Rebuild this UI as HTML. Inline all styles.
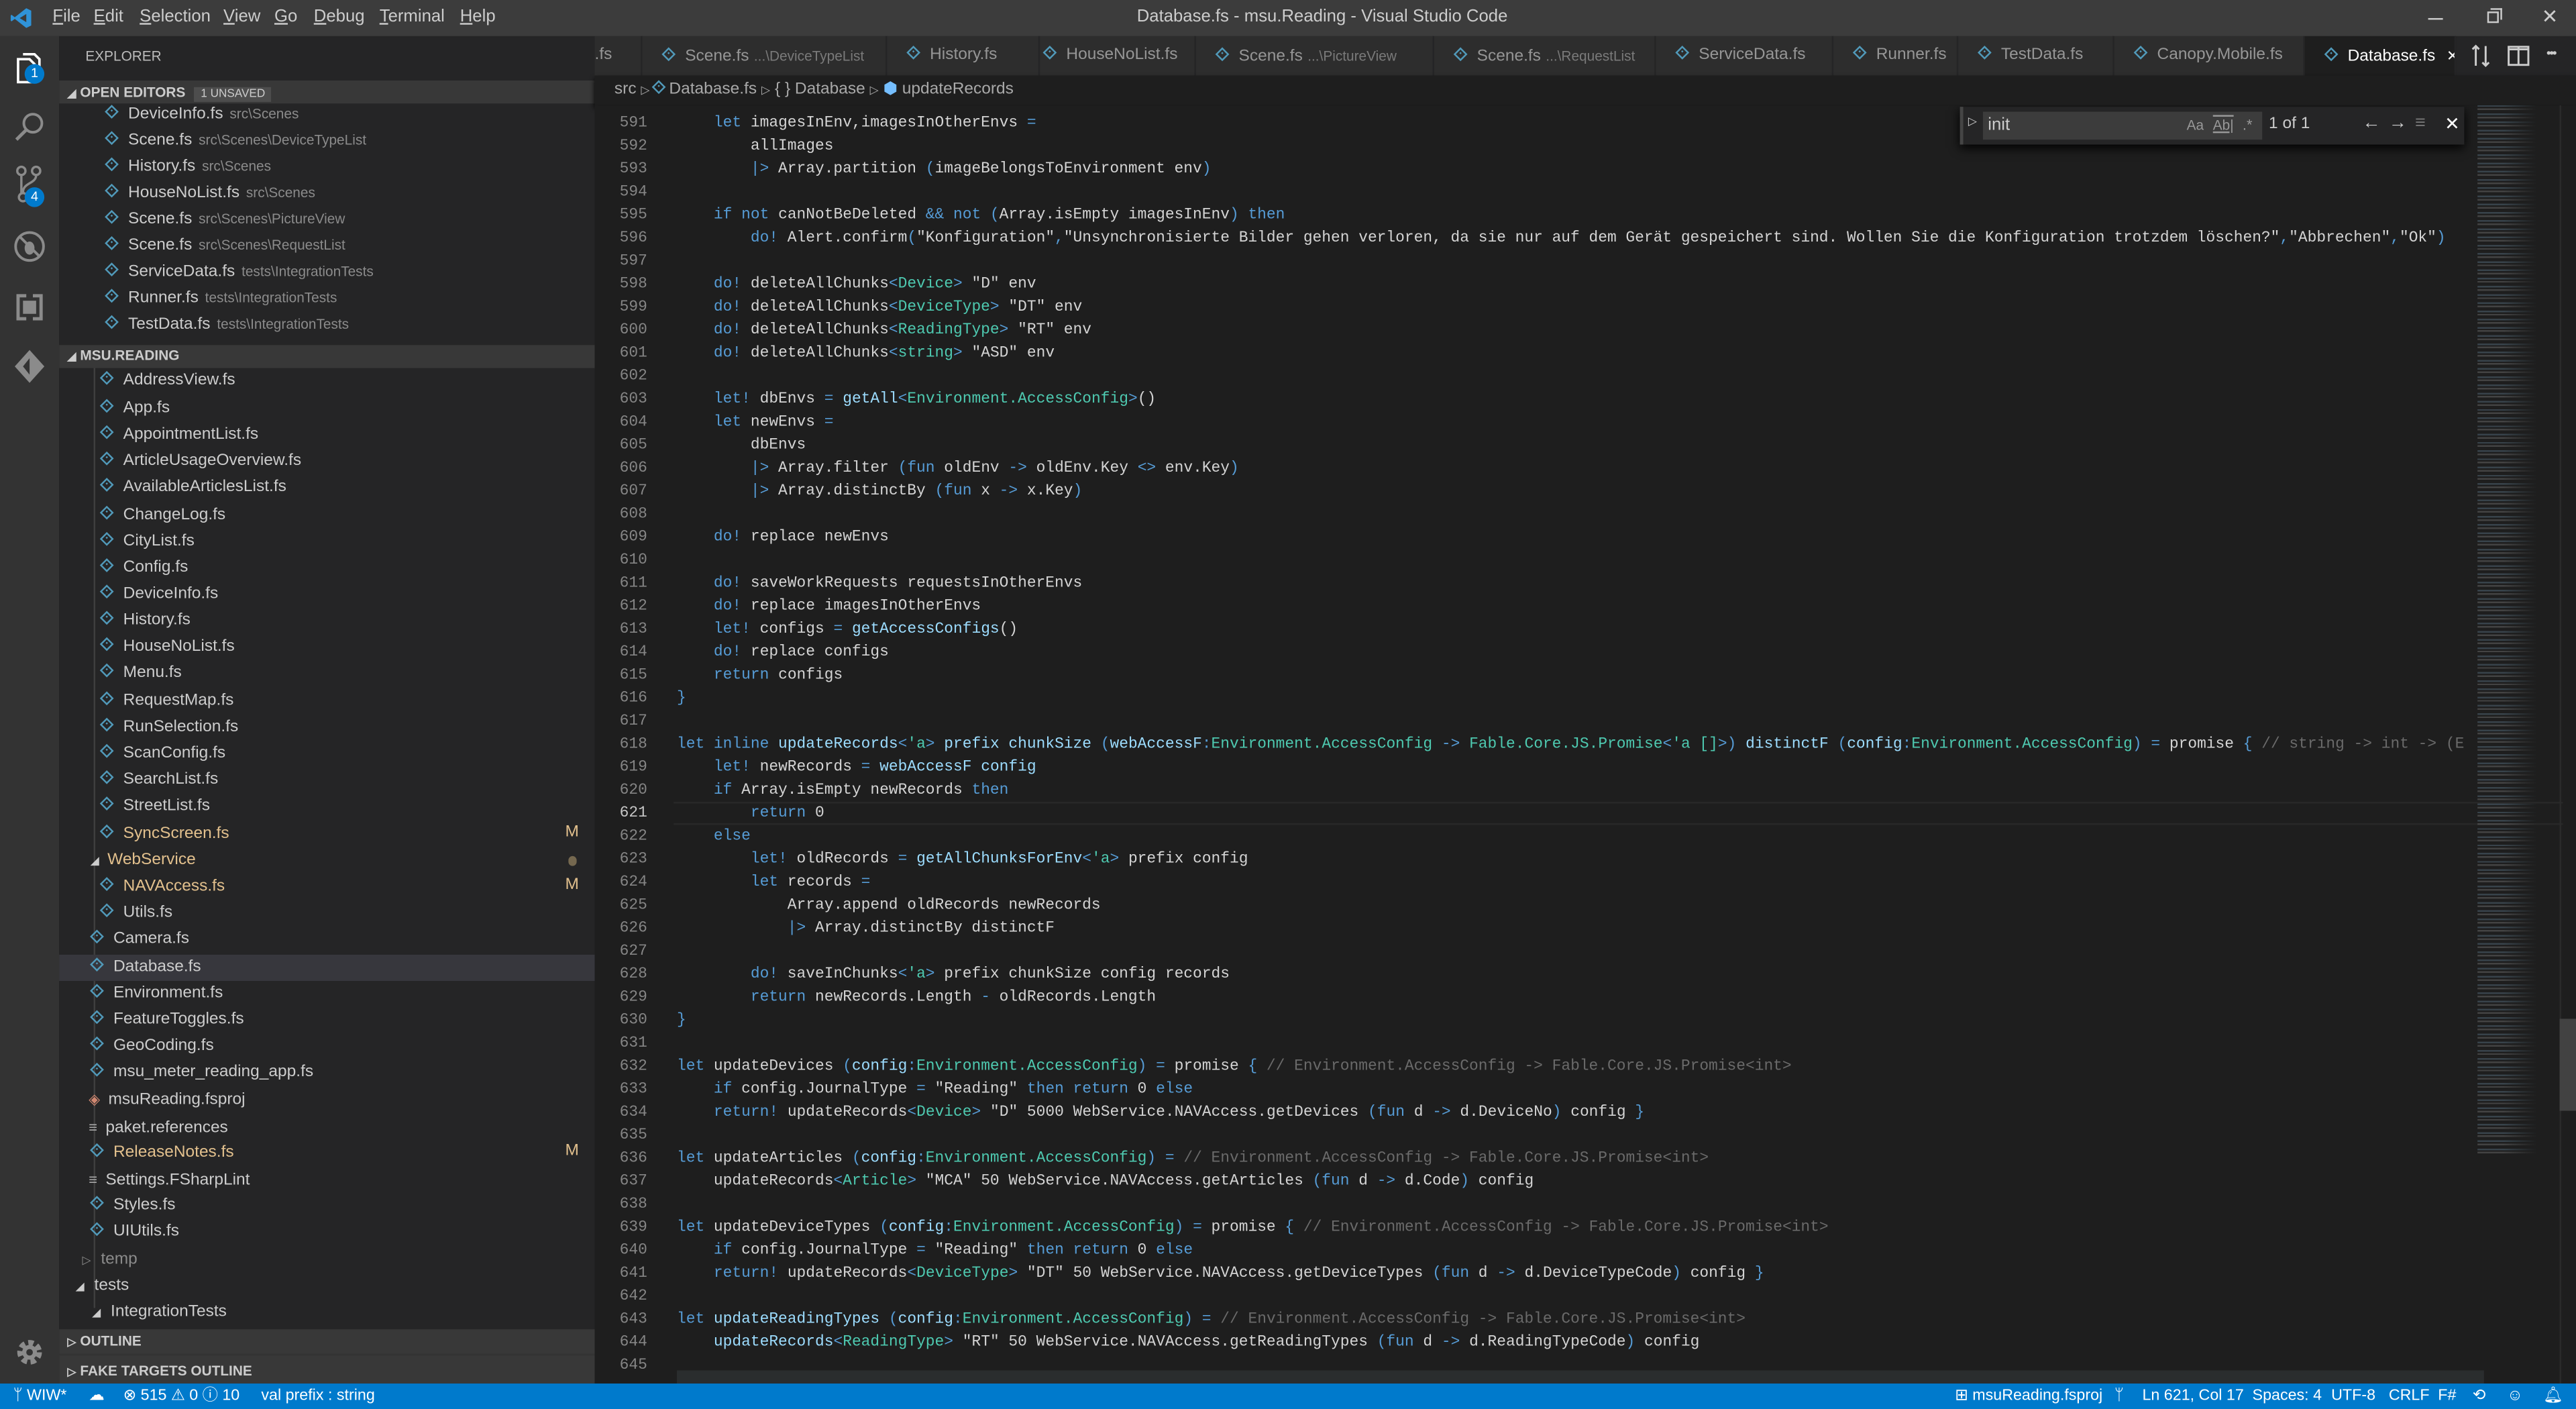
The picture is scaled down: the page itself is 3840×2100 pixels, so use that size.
<!DOCTYPE html>
<html><head><meta charset="utf-8">
<style>
*{box-sizing:border-box;margin:0;padding:0}
html,body{width:3840px;height:2100px;overflow:hidden;background:#1e1e1e}
#w{position:absolute;left:0;top:0;width:1568px;height:857.5px;transform:scale(2.44898);transform-origin:0 0;font-family:"Liberation Sans",sans-serif;font-size:11px;color:#cccccc;overflow:hidden;background:#1e1e1e}
.a{position:absolute}
#title{left:0;top:0;width:1568px;height:22px;background:#3c3c3c}
#title .m{position:absolute;top:4px;font-size:10.5px;color:#cccccc}
#title .m u{text-decoration:underline}
#act{left:0;top:22px;width:36px;height:820px;background:#333333}
#side{left:36px;top:22px;width:326px;height:820px;background:#252526}
.hdr{position:absolute;left:0;width:326px;height:14px;background:#383838;font-weight:bold;font-size:8.5px;color:#cccccc;line-height:14px}
.row{position:absolute;height:16px;line-height:16px;white-space:nowrap;font-size:10px;color:#cccccc}
.row .p{color:#8b8b8b;font-size:8.5px;margin-left:4px}
.fi{display:inline-block;width:6px;height:6px;border:1.6px solid #519aba;transform:rotate(45deg);margin-right:7px;position:relative;top:-1px}
.fi::after{content:"";position:absolute;left:0.6px;top:0.6px;width:1.2px;height:1.2px;background:#519aba}
.mod{color:#e2c08d}
.M{position:absolute;left:308px;color:#e2c08d;font-size:10px}
#tabs{left:362px;top:22px;width:1206px;height:24px;background:#252526}
.tab{position:absolute;top:0;height:24px;background:#2d2d2d;border-right:1px solid #252526;line-height:24px;font-size:10px;color:#969696;white-space:nowrap;padding-left:13px;overflow:hidden}
.tab .p{font-size:8.5px;color:#7a7a7a;margin-left:3px}
#bc{left:362px;top:46px;width:1206px;height:18px;background:#1e1e1e;font-size:10px;color:#a9a9a9;line-height:18px;padding-left:12px;box-shadow:0 2px 3px #000}
#ed{left:362px;top:64px;width:1206px;height:778px;background:#1e1e1e;overflow:hidden}
#ln{position:absolute;left:0;top:4px;width:32px;text-align:right;font-family:"Liberation Mono",monospace;font-size:9.35px;line-height:14px;color:#858585}
#code{position:absolute;left:50px;top:4px;font-family:"Liberation Mono",monospace;font-size:9.35px;line-height:14px;color:#d4d4d4}
#code div{height:14px;white-space:pre}
#ln div{height:14px}
.k{color:#569cd6}.t{color:#4ec9b0}.c{color:#6a6a6a}.f{color:#9cdcfe}
#status{left:0;top:842px;width:1568px;height:16px;background:#007acc;color:#fff;font-size:9.5px;line-height:16px}
#status span{position:absolute;top:0;white-space:nowrap}
</style></head><body><div id="w">

<div id="title" class="a">
<svg class="a" style="left:6px;top:4px" width="14" height="14" viewBox="0 0 14 14"><path d="M10 1 L13 2.5 V11.5 L10 13 L3 7.5 L1 9 L0.5 8.5 V5.5 L1 5 L3 6.5 Z M10 4.5 L6 7 L10 9.5 Z" fill="#2f93d8"/></svg>
<span class="m" style="left:32px"><u>F</u>ile</span>
<span class="m" style="left:57px"><u>E</u>dit</span>
<span class="m" style="left:85px"><u>S</u>election</span>
<span class="m" style="left:136px"><u>V</u>iew</span>
<span class="m" style="left:167px"><u>G</u>o</span>
<span class="m" style="left:191px"><u>D</u>ebug</span>
<span class="m" style="left:231px"><u>T</u>erminal</span>
<span class="m" style="left:280px"><u>H</u>elp</span>
<span class="m" style="left:692px">Database.fs - msu.Reading - Visual Studio Code</span>
<div class="a" style="left:1478px;top:11px;width:9px;height:1px;background:#ccc"></div>
<div class="a" style="left:1514px;top:7px;width:7px;height:7px;border:1px solid #ccc"></div>
<div class="a" style="left:1516px;top:5px;width:7px;height:7px;border-top:1px solid #ccc;border-right:1px solid #ccc"></div>
<span class="m" style="left:1547px;top:3px;font-size:12px">✕</span>
</div>

<div id="act" class="a">
<svg class="a" style="left:8px;top:9px" width="20" height="22" viewBox="0 0 20 22"><path d="M3 5 H10 L13 8 V19 H3 Z M6 2 H13 L16 5 V16" fill="none" stroke="#fff" stroke-width="1.5"/></svg>
<div class="a" style="left:15px;top:17px;width:12px;height:12px;border-radius:6px;background:#007acc;color:#fff;font-size:8px;text-align:center;line-height:12px">1</div>
<svg class="a" style="left:8px;top:45px" width="20" height="20" viewBox="0 0 20 20"><circle cx="12" cy="8" r="5.5" fill="none" stroke="#8b8b8b" stroke-width="1.6"/><path d="M8 12 L2 18" stroke="#8b8b8b" stroke-width="2"/></svg>
<svg class="a" style="left:9px;top:78px" width="18" height="24" viewBox="0 0 18 24"><circle cx="4" cy="4" r="2.5" fill="none" stroke="#8b8b8b" stroke-width="1.4"/><circle cx="13" cy="4" r="2.5" fill="none" stroke="#8b8b8b" stroke-width="1.4"/><circle cx="5" cy="20" r="2.5" fill="none" stroke="#8b8b8b" stroke-width="1.4"/><path d="M4 6.5 V17.5 M13 6.5 C13 12 5 11 5 17" fill="none" stroke="#8b8b8b" stroke-width="1.4"/></svg>
<div class="a" style="left:15px;top:92px;width:12px;height:12px;border-radius:6px;background:#007acc;color:#fff;font-size:8px;text-align:center;line-height:12px">4</div>
<svg class="a" style="left:8px;top:118px" width="20" height="20" viewBox="0 0 20 20"><circle cx="10" cy="10" r="8.5" fill="none" stroke="#8b8b8b" stroke-width="1.6"/><path d="M4 4 L16 16" stroke="#8b8b8b" stroke-width="1.6"/><ellipse cx="10" cy="11" rx="3" ry="4" fill="#8b8b8b"/></svg>
<svg class="a" style="left:9px;top:156px" width="18" height="18" viewBox="0 0 18 18"><path d="M1 1 H7 V3 H3 V15 H7 V17 H1 Z M11 1 H17 V17 H11 V15 H15 V3 H11 Z" fill="#8b8b8b"/><rect x="5" y="5" width="8" height="8" fill="#8b8b8b"/></svg>
<svg class="a" style="left:8px;top:190px" width="20" height="22" viewBox="0 0 20 22"><path d="M10 1 L19 11 L10 21 L1 11 Z" fill="#8b8b8b"/><path d="M10 6 L6 11 L10 16 Z" fill="#333"/></svg>
<svg class="a" style="left:9px;top:792px" width="18" height="18" viewBox="0 0 18 18"><circle cx="9" cy="9" r="5.5" fill="none" stroke="#8b8b8b" stroke-width="4" stroke-dasharray="3 2"/><circle cx="9" cy="9" r="4.5" fill="#8b8b8b"/><circle cx="9" cy="9" r="2" fill="#333"/></svg>
</div>

<div id="side" class="a">
<div class="a" style="left:16px;top:7px;font-size:8.5px;color:#bbbbbb">EXPLORER</div>
<div class="hdr" style="top:27px"><span style="margin-left:5px;font-size:7px">◢</span> <span>OPEN EDITORS</span> <span style="background:#4d4d4d;font-weight:normal;font-size:7px;padding:1px 4px;margin-left:3px">1 UNSAVED</span></div>
<div class="row" style="left:29px;top:39px"><i class="fi"></i>DeviceInfo.fs<span class="p">src\Scenes</span></div>
<div class="row" style="left:29px;top:55px"><i class="fi"></i>Scene.fs<span class="p">src\Scenes\DeviceTypeList</span></div>
<div class="row" style="left:29px;top:71px"><i class="fi"></i>History.fs<span class="p">src\Scenes</span></div>
<div class="row" style="left:29px;top:87px"><i class="fi"></i>HouseNoList.fs<span class="p">src\Scenes</span></div>
<div class="row" style="left:29px;top:103px"><i class="fi"></i>Scene.fs<span class="p">src\Scenes\PictureView</span></div>
<div class="row" style="left:29px;top:119px"><i class="fi"></i>Scene.fs<span class="p">src\Scenes\RequestList</span></div>
<div class="row" style="left:29px;top:135px"><i class="fi"></i>ServiceData.fs<span class="p">tests\IntegrationTests</span></div>
<div class="row" style="left:29px;top:151px"><i class="fi"></i>Runner.fs<span class="p">tests\IntegrationTests</span></div>
<div class="row" style="left:29px;top:167px"><i class="fi"></i>TestData.fs<span class="p">tests\IntegrationTests</span></div>
<div class="hdr" style="top:188px;height:13.5px;line-height:13.5px"><span style="margin-left:5px;font-size:7px">◢</span> MSU.READING</div>
<div class="a" style="left:21px;top:202px;width:1px;height:572px;background:#3f3f3f"></div>
<div class="a" style="left:0;top:559px;width:326px;height:16px;background:#37373d"></div>
<div class="row" style="left:26px;top:202px"><i class="fi"></i>AddressView.fs</div>
<div class="row" style="left:26px;top:219px"><i class="fi"></i>App.fs</div>
<div class="row" style="left:26px;top:235px"><i class="fi"></i>AppointmentList.fs</div>
<div class="row" style="left:26px;top:251px"><i class="fi"></i>ArticleUsageOverview.fs</div>
<div class="row" style="left:26px;top:267px"><i class="fi"></i>AvailableArticlesList.fs</div>
<div class="row" style="left:26px;top:284px"><i class="fi"></i>ChangeLog.fs</div>
<div class="row" style="left:26px;top:300px"><i class="fi"></i>CityList.fs</div>
<div class="row" style="left:26px;top:316px"><i class="fi"></i>Config.fs</div>
<div class="row" style="left:26px;top:332px"><i class="fi"></i>DeviceInfo.fs</div>
<div class="row" style="left:26px;top:348px"><i class="fi"></i>History.fs</div>
<div class="row" style="left:26px;top:364px"><i class="fi"></i>HouseNoList.fs</div>
<div class="row" style="left:26px;top:380px"><i class="fi"></i>Menu.fs</div>
<div class="row" style="left:26px;top:397px"><i class="fi"></i>RequestMap.fs</div>
<div class="row" style="left:26px;top:413px"><i class="fi"></i>RunSelection.fs</div>
<div class="row" style="left:26px;top:429px"><i class="fi"></i>ScanConfig.fs</div>
<div class="row" style="left:26px;top:445px"><i class="fi"></i>SearchList.fs</div>
<div class="row" style="left:26px;top:461px"><i class="fi"></i>StreetList.fs</div>
<div class="row mod" style="left:26px;top:478px"><i class="fi"></i>SyncScreen.fs</div><span class="M" style="top:479px">M</span>
<div class="row mod" style="left:19px;top:494px"><span style="font-size:7px;color:#ccc;margin-right:5px">◢</span>WebService</div><div class="a" style="left:310px;top:499px;width:5px;height:6px;border-radius:3px;background:#75684f"></div>
<div class="row mod" style="left:26px;top:510px"><i class="fi"></i>NAVAccess.fs</div><span class="M" style="top:511px">M</span>
<div class="row" style="left:26px;top:526px"><i class="fi"></i>Utils.fs</div>
<div class="row" style="left:20px;top:542px"><i class="fi"></i>Camera.fs</div>
<div class="row" style="left:20px;top:559px"><i class="fi"></i>Database.fs</div>
<div class="row" style="left:20px;top:575px"><i class="fi"></i>Environment.fs</div>
<div class="row" style="left:20px;top:591px"><i class="fi"></i>FeatureToggles.fs</div>
<div class="row" style="left:20px;top:607px"><i class="fi"></i>GeoCoding.fs</div>
<div class="row" style="left:20px;top:623px"><i class="fi"></i>msu_meter_reading_app.fs</div>
<div class="row" style="left:18px;top:639px"><span style="color:#d08770;font-size:9px;margin-right:5px">◈</span>msuReading.fsproj</div>
<div class="row" style="left:18px;top:656px"><span style="color:#aaa;font-size:9px;margin-right:5px">≡</span>paket.references</div>
<div class="row mod" style="left:20px;top:672px"><i class="fi"></i>ReleaseNotes.fs</div><span class="M" style="top:673px">M</span>
<div class="row" style="left:18px;top:688px"><span style="color:#aaa;font-size:9px;margin-right:5px">≡</span>Settings.FSharpLint</div>
<div class="row" style="left:20px;top:704px"><i class="fi"></i>Styles.fs</div>
<div class="row" style="left:20px;top:720px"><i class="fi"></i>UIUtils.fs</div>
<div class="row" style="left:14px;top:737px;color:#8b8b8b"><span style="font-size:7px;margin-right:6px">▷</span>temp</div>
<div class="row" style="left:10px;top:753px"><span style="font-size:7px;margin-right:6px">◢</span>tests</div>
<div class="row" style="left:20px;top:769px"><span style="font-size:7px;margin-right:6px">◢</span>IntegrationTests</div>
<div class="hdr" style="top:787px;height:15px;line-height:15px;background:#383838"><span style="margin-left:5px;font-size:7px">▷</span> OUTLINE</div>
<div class="hdr" style="top:802px;height:18px;line-height:18px;background:#383838;border-top:1px solid #333"><span style="margin-left:5px;font-size:7px">▷</span> FAKE TARGETS OUTLINE</div>
</div>

<div id="tabs" class="a">
<div class="tab" style="left:0;width:29px;padding-left:0">.fs</div>
<div class="tab" style="left:29px;width:149px"><i class="fi"></i>Scene.fs<span class="p">...\DeviceTypeList</span></div>
<div class="tab" style="left:178px;width:93px"><i class="fi"></i>History.fs</div>
<div class="tab" style="left:271px;width:95px;padding-left:3px"><i class="fi"></i>HouseNoList.fs</div>
<div class="tab" style="left:366px;width:145px"><i class="fi"></i>Scene.fs<span class="p">...\PictureView</span></div>
<div class="tab" style="left:511px;width:135px"><i class="fi"></i>Scene.fs<span class="p">...\RequestList</span></div>
<div class="tab" style="left:646px;width:108px"><i class="fi"></i>ServiceData.fs</div>
<div class="tab" style="left:754px;width:76px"><i class="fi"></i>Runner.fs</div>
<div class="tab" style="left:830px;width:95px"><i class="fi"></i>TestData.fs</div>
<div class="tab" style="left:925px;width:116px"><i class="fi"></i>Canopy.Mobile.fs</div>
<div class="tab" style="left:1041px;width:92px;background:#1e1e1e;color:#fff"><i class="fi"></i>Database.fs <span style="margin-left:4px;font-size:9px">✕</span></div>
<svg class="a" style="left:1141px;top:5px" width="14" height="14" viewBox="0 0 14 14"><path d="M4 1 V13 M10 1 V13 M2 3 L4 1 L6 3 M8 11 L10 13 L12 11" fill="none" stroke="#ccc" stroke-width="1.2"/></svg>
<svg class="a" style="left:1164px;top:5px" width="14" height="14" viewBox="0 0 14 14"><rect x="1" y="1.5" width="12" height="11" fill="none" stroke="#ccc" stroke-width="1.2"/><path d="M7 1.5 V12.5 M1 3 H13" stroke="#ccc" stroke-width="1.2"/></svg>
<span class="a" style="left:1188px;top:6px;color:#ccc;font-size:8px;letter-spacing:-1px">•••</span>
</div>

<div id="bc" class="a">src <span style="font-size:7px">▷</span> <i class="fi" style="margin-right:3px"></i>Database.fs <span style="font-size:7px">▷</span> { } Database <span style="font-size:7px">▷</span> <span style="color:#75beff">⬢</span> updateRecords</div>

<div id="ed" class="a">
<div class="a" style="left:48px;top:424px;width:1150px;height:14px;border-top:1px solid #282828;border-bottom:1px solid #282828"></div>
<div id="ln">
<div>591</div><div>592</div><div>593</div><div>594</div><div>595</div><div>596</div><div>597</div><div>598</div><div>599</div><div>600</div><div>601</div><div>602</div><div>603</div><div>604</div><div>605</div><div>606</div><div>607</div><div>608</div><div>609</div><div>610</div><div>611</div><div>612</div><div>613</div><div>614</div><div>615</div><div>616</div><div>617</div><div>618</div><div>619</div><div>620</div><div style="color:#c6c6c6">621</div><div>622</div><div>623</div><div>624</div><div>625</div><div>626</div><div>627</div><div>628</div><div>629</div><div>630</div><div>631</div><div>632</div><div>633</div><div>634</div><div>635</div><div>636</div><div>637</div><div>638</div><div>639</div><div>640</div><div>641</div><div>642</div><div>643</div><div>644</div><div>645</div>
</div>
<div id="code">
<div>    <span class="k">let</span> imagesInEnv,imagesInOtherEnvs <span class="k">=</span></div>
<div>        allImages</div>
<div>        <span class="k">|&gt;</span> Array.partition <span class="k">(</span>imageBelongsToEnvironment env<span class="k">)</span></div>
<div></div>
<div>    <span class="k">if not</span> canNotBeDeleted <span class="k">&amp;&amp; not (</span>Array.isEmpty imagesInEnv<span class="k">) then</span></div>
<div>        <span class="k">do!</span> Alert.confirm<span class="k">(</span>"Konfiguration"<span class="k">,</span>"Unsynchronisierte Bilder gehen verloren, da sie nur auf dem Gerät gespeichert sind. Wollen Sie die Konfiguration trotzdem löschen?"<span class="k">,</span>"Abbrechen"<span class="k">,</span>"Ok"<span class="k">)</span></div>
<div></div>
<div>    <span class="k">do!</span> deleteAllChunks<span class="k">&lt;</span><span class="t">Device</span><span class="k">&gt;</span> "D" env</div>
<div>    <span class="k">do!</span> deleteAllChunks<span class="k">&lt;</span><span class="t">DeviceType</span><span class="k">&gt;</span> "DT" env</div>
<div>    <span class="k">do!</span> deleteAllChunks<span class="k">&lt;</span><span class="t">ReadingType</span><span class="k">&gt;</span> "RT" env</div>
<div>    <span class="k">do!</span> deleteAllChunks<span class="k">&lt;</span><span class="t">string</span><span class="k">&gt;</span> "ASD" env</div>
<div></div>
<div>    <span class="k">let!</span> dbEnvs <span class="k">=</span> <span class="f">getAll</span><span class="k">&lt;</span><span class="t">Environment.AccessConfig</span><span class="k">&gt;</span>()</div>
<div>    <span class="k">let</span> newEnvs <span class="k">=</span></div>
<div>        dbEnvs</div>
<div>        <span class="k">|&gt;</span> Array.filter <span class="k">(fun</span> oldEnv <span class="k">-&gt;</span> oldEnv.Key <span class="k">&lt;&gt;</span> env.Key<span class="k">)</span></div>
<div>        <span class="k">|&gt;</span> Array.distinctBy <span class="k">(fun</span> x <span class="k">-&gt;</span> x.Key<span class="k">)</span></div>
<div></div>
<div>    <span class="k">do!</span> replace newEnvs</div>
<div></div>
<div>    <span class="k">do!</span> saveWorkRequests requestsInOtherEnvs</div>
<div>    <span class="k">do!</span> replace imagesInOtherEnvs</div>
<div>    <span class="k">let!</span> configs <span class="k">=</span> <span class="f">getAccessConfigs</span>()</div>
<div>    <span class="k">do!</span> replace configs</div>
<div>    <span class="k">return</span> configs</div>
<div><span class="k">}</span></div>
<div></div>
<div><span class="k">let inline</span> <span class="f">updateRecords</span><span class="k">&lt;</span><span class="t">'a</span><span class="k">&gt;</span> <span class="f">prefix chunkSize</span> <span class="k">(</span><span class="f">webAccessF</span><span class="k">:</span><span class="t">Environment.AccessConfig</span> <span class="k">-&gt;</span> <span class="t">Fable.Core.JS.Promise</span><span class="k">&lt;</span><span class="t">'a []</span><span class="k">&gt;)</span> <span class="f">distinctF</span> <span class="k">(</span><span class="f">config</span><span class="k">:</span><span class="t">Environment.AccessConfig</span><span class="k">)</span> <span class="k">=</span> promise <span class="k">{</span> <span class="c">// string -&gt; int -&gt; (E</span></div>
<div>    <span class="k">let!</span> newRecords <span class="k">=</span> <span class="f">webAccessF config</span></div>
<div>    <span class="k">if</span> Array.isEmpty newRecords <span class="k">then</span></div>
<div>        <span class="k">return</span> 0</div>
<div>    <span class="k">else</span></div>
<div>        <span class="k">let!</span> oldRecords <span class="k">=</span> <span class="f">getAllChunksForEnv</span><span class="k">&lt;</span><span class="t">'a</span><span class="k">&gt;</span> prefix config</div>
<div>        <span class="k">let</span> records <span class="k">=</span></div>
<div>            Array.append oldRecords newRecords</div>
<div>            <span class="k">|&gt;</span> Array.distinctBy distinctF</div>
<div></div>
<div>        <span class="k">do!</span> saveInChunks<span class="k">&lt;</span><span class="t">'a</span><span class="k">&gt;</span> prefix chunkSize config records</div>
<div>        <span class="k">return</span> newRecords.Length <span class="k">-</span> oldRecords.Length</div>
<div><span class="k">}</span></div>
<div></div>
<div><span class="k">let</span> updateDevices <span class="k">(</span><span class="f">config</span><span class="k">:</span><span class="t">Environment.AccessConfig</span><span class="k">) =</span> promise <span class="k">{</span> <span class="c">// Environment.AccessConfig -&gt; Fable.Core.JS.Promise&lt;int&gt;</span></div>
<div>    <span class="k">if</span> config.JournalType <span class="k">=</span> "Reading" <span class="k">then return</span> 0 <span class="k">else</span></div>
<div>    <span class="k">return!</span> updateRecords<span class="k">&lt;</span><span class="t">Device</span><span class="k">&gt;</span> "D" 5000 WebService.NAVAccess.getDevices <span class="k">(fun</span> d <span class="k">-&gt;</span> d.DeviceNo<span class="k">)</span> config <span class="k">}</span></div>
<div></div>
<div><span class="k">let</span> updateArticles <span class="k">(</span><span class="f">config</span><span class="k">:</span><span class="t">Environment.AccessConfig</span><span class="k">) =</span> <span class="c">// Environment.AccessConfig -&gt; Fable.Core.JS.Promise&lt;int&gt;</span></div>
<div>    updateRecords<span class="k">&lt;</span><span class="t">Article</span><span class="k">&gt;</span> "MCA" 50 WebService.NAVAccess.getArticles <span class="k">(fun</span> d <span class="k">-&gt;</span> d.Code<span class="k">)</span> config</div>
<div></div>
<div><span class="k">let</span> updateDeviceTypes <span class="k">(</span><span class="f">config</span><span class="k">:</span><span class="t">Environment.AccessConfig</span><span class="k">) =</span> promise <span class="k">{</span> <span class="c">// Environment.AccessConfig -&gt; Fable.Core.JS.Promise&lt;int&gt;</span></div>
<div>    <span class="k">if</span> config.JournalType <span class="k">=</span> "Reading" <span class="k">then return</span> 0 <span class="k">else</span></div>
<div>    <span class="k">return!</span> updateRecords<span class="k">&lt;</span><span class="t">DeviceType</span><span class="k">&gt;</span> "DT" 50 WebService.NAVAccess.getDeviceTypes <span class="k">(fun</span> d <span class="k">-&gt;</span> d.DeviceTypeCode<span class="k">)</span> config <span class="k">}</span></div>
<div></div>
<div><span class="k">let</span> <span class="f">updateReadingTypes</span> <span class="k">(</span><span class="f">config</span><span class="k">:</span><span class="t">Environment.AccessConfig</span><span class="k">) =</span> <span class="c">// Environment.AccessConfig -&gt; Fable.Core.JS.Promise&lt;int&gt;</span></div>
<div>    <span class="f">updateRecords</span><span class="k">&lt;</span><span class="t">ReadingType</span><span class="k">&gt;</span> "RT" 50 WebService.NAVAccess.getReadingTypes <span class="k">(fun</span> d <span class="k">-&gt;</span> d.ReadingTypeCode<span class="k">)</span> config</div>
<div></div>
</div>
<div class="a" style="left:50px;top:770px;width:1100px;height:8px;background:#2a2d2e"></div>
<div class="a" style="left:831px;top:1px;width:307px;height:23px;background:#252526;box-shadow:0 2px 6px #000;border-left:2px solid #454545">
<span class="a" style="left:3px;top:5px;font-size:7px;color:#ccc">▷</span>
<div class="a" style="left:12px;top:3px;width:170px;height:17px;background:#3c3c3c;color:#ccc;font-size:10.5px;line-height:17px;padding-left:3px">init
<span class="a" style="left:124px;top:0;font-size:8.5px;color:#999">Aa</span>
<span class="a" style="left:140px;top:0;font-size:8.5px;color:#999;text-decoration:underline overline">Ab|</span>
<span class="a" style="left:158px;top:0;font-size:9px;color:#999">.*</span></div>
<span class="a" style="left:186px;top:5px;font-size:10px;color:#ccc">1 of 1</span>
<span class="a" style="left:243px;top:4px;font-size:11px;color:#ccc">←</span>
<span class="a" style="left:259px;top:4px;font-size:11px;color:#ccc">→</span>
<span class="a" style="left:275px;top:4px;font-size:11px;color:#777">≡</span>
<span class="a" style="left:293px;top:4px;font-size:11px;color:#fff">✕</span>
</div>
<div class="a" style="left:1146px;top:0;width:52px;height:640px;opacity:0.35;background:repeating-linear-gradient(180deg,#6a8aa0 0 1px,transparent 1px 2px,#888 2px 3px,transparent 3px 5px);-webkit-mask:linear-gradient(90deg,#000 0 30%,transparent 70%)"></div>
<div class="a" style="left:1196px;top:0;width:1px;height:778px;background:#2b2b2b"></div>
<div class="a" style="left:1196px;top:556px;width:10px;height:56px;background:#424242"></div>
</div>

<div id="status" class="a">
<span style="left:8px">ᛘ WIW*</span>
<span style="left:54px">☁</span>
<span style="left:75px">⊗ 515 ⚠ 0 ⓘ 10</span>
<span style="left:159px">val prefix : string</span>
<span style="left:1190px">⊞ msuReading.fsproj</span>
<span style="left:1287px">ᛘ</span>
<span style="left:1304px">Ln 621, Col 17</span>
<span style="left:1371px">Spaces: 4</span>
<span style="left:1419px">UTF-8</span>
<span style="left:1454px">CRLF</span>
<span style="left:1484px">F#</span>
<span style="left:1505px">⟲</span>
<span style="left:1526px">☺</span>
<span style="left:1548px">🔔︎</span>
</div>
</div></body></html>
